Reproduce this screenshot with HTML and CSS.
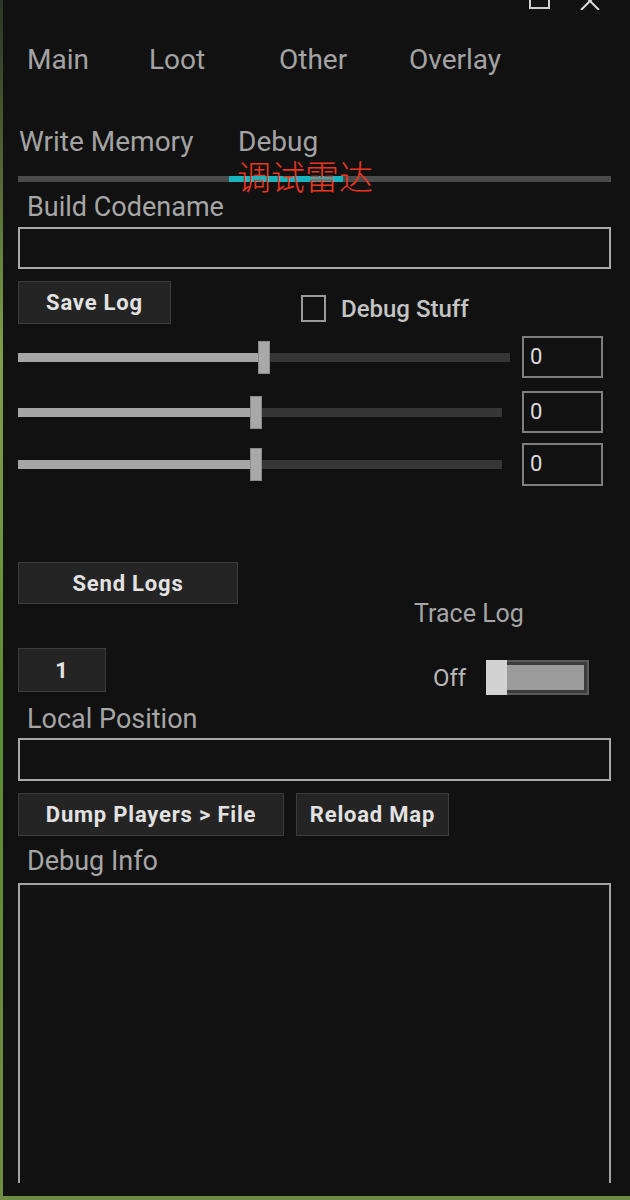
FILE: index.html
```html
<!DOCTYPE html>
<html lang="en">
  <head>
    <meta charset="UTF-8" />
    <meta name="viewport" content="width=device-width, initial-scale=1.0" />
    <title>Radar - Debug</title>
    <link rel="stylesheet" href="styles.css">
  </head>
  <body>
    <div class="window">
      <div class="titlebar">
        <svg class="caption-btn" width="22" height="10" viewBox="0 0 22 10">
          <rect x="1" y="-12" width="19" height="20" fill="none" stroke="#cfcfcf" stroke-width="2" />
        </svg>
        <svg class="caption-btn" width="20" height="10" viewBox="0 0 20 10">
          <path d="M1 -8 L19 10 M19 -8 L1 10" stroke="#dcdcdc" stroke-width="2" fill="none" />
        </svg>
      </div>

      <nav class="tabs tabs-main">
        <span class="tab tab-w1">Main</span>
        <span class="tab tab-w2">Loot</span>
        <span class="tab tab-w2">Other</span>
        <span class="tab">Overlay</span>
      </nav>
      <nav class="tabs tabs-sub">
        <span class="tab tab-w3">Write Memory</span>
        <span class="tab active">Debug</span>
      </nav>
      <div class="tab-rail">
        <div class="tab-indicator"></div>
        <span class="watermark">调试雷达</span>
      </div>

      <label class="field-label label-first">Build Codename</label>
      <div class="textbox"></div>

      <div class="row row-save">
        <button class="btn btn-save">Save Log</button>
        <label class="check"><span class="check-box"></span>Debug Stuff</label>
      </div>

      <div class="slider-row slider-row-1">
        <div class="slider slider-long" style="--value: 50%">
          <div class="slider-fill"></div>
          <div class="slider-thumb"></div>
        </div>
        <div class="numbox">0</div>
      </div>
      <div class="slider-row slider-row-2">
        <div class="slider" style="--value: 49.2%">
          <div class="slider-fill"></div>
          <div class="slider-thumb"></div>
        </div>
        <div class="numbox">0</div>
      </div>
      <div class="slider-row slider-row-3">
        <div class="slider" style="--value: 49.2%">
          <div class="slider-fill"></div>
          <div class="slider-thumb"></div>
        </div>
        <div class="numbox">0</div>
      </div>

      <div class="trace-area">
        <div class="trace-left">
          <button class="btn btn-send">Send Logs</button>
          <div class="btn level-box">1</div>
        </div>
        <div class="trace-right">
          <div class="trace-label">Trace Log</div>
          <div class="toggle-row">
            <span class="toggle-text">Off</span>
            <div class="toggle">
              <div class="toggle-knob"></div>
              <div class="toggle-fill"></div>
            </div>
          </div>
        </div>
      </div>

      <label class="field-label label-pos">Local Position</label>
      <div class="textbox textbox-pos"></div>

      <div class="row row-dump">
        <button class="btn btn-dump">Dump Players &gt; File</button>
        <button class="btn btn-reload">Reload Map</button>
      </div>

      <label class="field-label label-info">Debug Info</label>
      <div class="info-box"></div>
    </div>
  </body>
</html>
```

FILE: styles.css
```css
* {
  margin: 0;
  padding: 0;
  box-sizing: border-box;
}

body {
  background: linear-gradient(180deg, #2c3324 0%, #7fa04a 30%, #5d8a33 60%, #6f8c45 100%);
  font-family: Roboto, "Noto Sans", sans-serif;
  color: #a8a8a8;
  height: 1200px;
  overflow: hidden;
}

.window {
  margin-left: 3px;
  height: 1196px;
  background-color: #111111;
  padding: 0 19px 0 15px;
}

/* caption buttons, cut off by the top edge */
.titlebar {
  height: 42px;
  display: flex;
  justify-content: flex-end;
  align-items: flex-start;
  gap: 29px;
  padding-right: 11px;
}

.caption-btn {
  display: block;
}

.tabs {
  display: flex;
  height: 36px;
  line-height: 36px;
  font-size: 28px;
  color: #a3a3a3;
}

.tabs-main {
  padding-left: 9px;
}

.tabs-sub {
  margin-top: 46px;
  padding-left: 1px;
}

.tab-w1 { width: 122px; }
.tab-w2 { width: 130px; }
.tab-w3 { width: 219px; }

.tab-rail {
  position: relative;
  margin-top: 16px;
  height: 6px;
  background-color: #4b4b4b;
}

.tab-indicator {
  margin-left: 211px;
  width: 114px;
  height: 6px;
  background-color: #18b4be;
}

.watermark {
  position: absolute;
  left: 219px;
  top: -17px;
  font-family: "Noto Sans CJK SC", sans-serif;
  font-size: 34px;
  line-height: 34px;
  font-weight: 300;
  color: #e8351f;
  white-space: nowrap;
}

.field-label {
  display: block;
  height: 30px;
  line-height: 30px;
  font-size: 27px;
  padding-left: 9px;
  color: #a6a6a6;
}

.label-first { margin-top: 10px; }
.label-pos { margin-top: 9px; }
.label-info { margin-top: 10px; }

.textbox {
  margin-top: 5px;
  height: 42px;
  border: 2px solid #a9a9a9;
  background-color: #111;
}

.textbox-pos {
  margin-top: 4px;
  height: 43px;
}

.row {
  display: flex;
  align-items: flex-start;
}

.btn {
  background-color: #242424;
  border: 1px solid #3c3c3c;
  color: #e2e2e2;
  font-family: Roboto, sans-serif;
  font-weight: bold;
  font-size: 22px;
  letter-spacing: 0.8px;
  display: flex;
  align-items: center;
  justify-content: center;
}

.row-save {
  margin-top: 12px;
}

.btn-save {
  width: 153px;
  height: 43px;
}

.check {
  display: flex;
  align-items: center;
  margin-top: 14px;
  margin-left: 130px;
  font-size: 24px;
  font-weight: 500;
  color: #c4c4c4;
  height: 27px;
}

.check-box {
  width: 25px;
  height: 27px;
  border: 2px solid #9a9a9a;
  margin-right: 15px;
}

.slider-row {
  display: flex;
  align-items: center;
  height: 42px;
}

.slider-row-1 { margin-top: 12px; }
.slider-row-2 { margin-top: 13px; }
.slider-row-3 { margin-top: 10px; height: 43px; }

.slider {
  position: relative;
  width: 484px;
  height: 9px;
  background-color: #363636;
}

.slider-long {
  width: 492px;
}

.slider-fill {
  width: var(--value);
  height: 100%;
  background-color: #a6a6a6;
}

.slider-thumb {
  position: absolute;
  left: calc(var(--value) - 6px);
  top: -12px;
  width: 12px;
  height: 33px;
  background-color: #a9a9a9;
  border: 1px solid #8a8a8a;
}

.numbox {
  margin-left: auto;
  margin-right: 8px;
  width: 81px;
  height: 100%;
  border: 2px solid #7e7e7e;
  font-size: 22px;
  line-height: 38px;
  padding-left: 6px;
  color: #dcdcdc;
}

.trace-area {
  margin-top: 76px;
  display: grid;
  grid-template-columns: 396px 1fr;
}

.btn-send {
  width: 220px;
  height: 42px;
}

.level-box {
  margin-top: 44px;
  width: 88px;
  height: 44px;
}

.trace-right {
  padding-top: 37px;
}

.trace-label {
  height: 30px;
  line-height: 30px;
  font-size: 25px;
  color: #a6a6a6;
}

.toggle-row {
  margin-top: 31px;
  display: flex;
  align-items: center;
  padding-left: 19px;
  gap: 20px;
}

.toggle-text {
  font-size: 24px;
  color: #b8b8b8;
}

.toggle {
  display: flex;
  width: 103px;
  height: 35px;
  background-color: #3c3c3c;
  border: 2px solid #5a5a5a;
}

.toggle-knob {
  width: 21px;
  margin: -2px 0 -2px -2px;
  background-color: #d2d2d2;
}

.toggle-fill {
  flex: 1;
  margin: 3px 3px 3px 0;
  background-color: #9b9b9b;
}

.row-dump {
  margin-top: 12px;
  gap: 12px;
}

.btn-dump {
  width: 266px;
  height: 43px;
}

.btn-reload {
  width: 153px;
  height: 43px;
}

.info-box {
  margin-top: 7px;
  height: 300px;
  border: 2px solid #a3a3a3;
  border-bottom: none;
  background-color: #121212;
}
```
